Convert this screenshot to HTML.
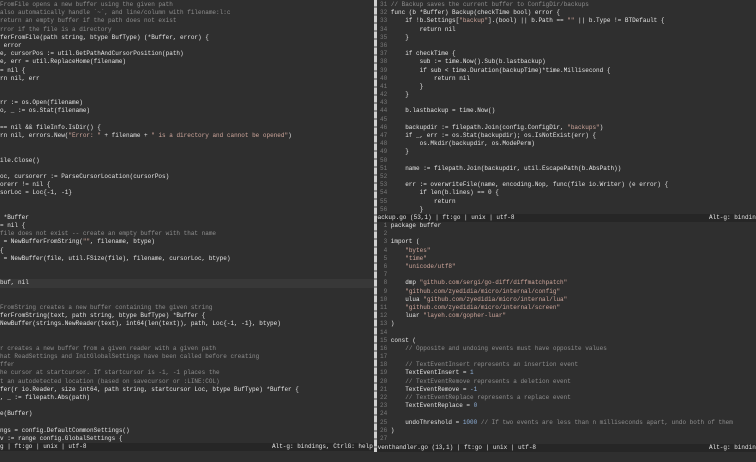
<!DOCTYPE html>
<html><head><meta charset="utf-8"><style>
html,body{margin:0;padding:0;background:#2f2f2f;width:756px;height:462px;overflow:hidden}
.p{position:absolute;top:1px;margin:0;font-family:"Liberation Mono",monospace;font-size:6px;line-height:8.18px;color:#e6e6e6;white-space:pre}
.c{color:#8e8e8e}
.s{color:#cfa79c}
.n{color:#7a7a7a}
.b{color:#8fb0d8}
.hl{background:#383838;display:inline-block;width:374px}
#L{left:0;width:374px;overflow:hidden}
#R{left:380px;width:376px;overflow:hidden}
.sb{position:absolute;height:8.18px;background:#262626;font-family:"Liberation Mono",monospace;font-size:6px;line-height:8.18px;color:#e6e6e6;white-space:pre;overflow:hidden}
.sb i{font-style:normal;position:absolute;top:0}
#div{position:absolute;left:374px;top:0;width:3px;height:452px;background:repeating-linear-gradient(#cfcfcf 0 6px,#8a8a8a 6px 8px)}
</style></head><body>
<pre class="p" id="L"><span class="c">FromFile opens a new buffer using the given path</span>
<span class="c">also automatically handle `~`, and line/column with filename:l:c</span>
<span class="c">return an empty buffer if the path does not exist</span>
<span class="c">rror if the file is a directory</span>
ferFromFile(path string, btype BufType) (*Buffer, error) {
 error
e, cursorPos := util.GetPathAndCursorPosition(path)
e, err = util.ReplaceHome(filename)
= nil {
rn nil, err


rr := os.Open(filename)
o, _ := os.Stat(filename)

== nil &amp;&amp; fileInfo.IsDir() {
rn nil, errors.New(<span class="s">"Error: "</span> + filename + <span class="s">" is a directory and cannot be opened"</span>)


ile.Close()

oc, cursorerr := ParseCursorLocation(cursorPos)
orerr != nil {
sorLoc = Loc{-1, -1}


 *Buffer
= nil {
<span class="c">file does not exist -- create an empty buffer with that name</span>
 = NewBufferFromString(<span class="s">""</span>, filename, btype)
{
 = NewBuffer(file, util.FSize(file), filename, cursorLoc, btype)


<span class="hl">buf, nil</span>


<span class="c">FromString creates a new buffer containing the given string</span>
ferFromString(text, path string, btype BufType) *Buffer {
NewBuffer(strings.NewReader(text), int64(len(text)), path, Loc{-1, -1}, btype)


<span class="c">r creates a new buffer from a given reader with a given path</span>
<span class="c">hat ReadSettings and InitGlobalSettings have been called before creating</span>
<span class="c">ffer</span>
<span class="c">he cursor at startcursor. If startcursor is -1, -1 places the</span>
<span class="c">t an autodetected location (based on savecursor or :LINE:COL)</span>
fer(r io.Reader, size int64, path string, startcursor Loc, btype BufType) *Buffer {
, _ := filepath.Abs(path)

e(Buffer)

ngs = config.DefaultCommonSettings()
v := range config.GlobalSettings {</pre>
<pre class="p" id="R"><span class="n">31</span> <span class="c">// Backup saves the current buffer to ConfigDir/backups</span>
<span class="n">32</span> func (b *Buffer) Backup(checkTime bool) error {
<span class="n">33</span>     if !b.Settings[<span class="s">"backup"</span>].(bool) || b.Path == <span class="s">""</span> || b.Type != BTDefault {
<span class="n">34</span>         return nil
<span class="n">35</span>     }
<span class="n">36</span>
<span class="n">37</span>     if checkTime {
<span class="n">38</span>         sub := time.Now().Sub(b.lastbackup)
<span class="n">39</span>         if sub &lt; time.Duration(backupTime)*time.Millisecond {
<span class="n">40</span>             return nil
<span class="n">41</span>         }
<span class="n">42</span>     }
<span class="n">43</span>
<span class="n">44</span>     b.lastbackup = time.Now()
<span class="n">45</span>
<span class="n">46</span>     backupdir := filepath.Join(config.ConfigDir, <span class="s">"backups"</span>)
<span class="n">47</span>     if _, err := os.Stat(backupdir); os.IsNotExist(err) {
<span class="n">48</span>         os.Mkdir(backupdir, os.ModePerm)
<span class="n">49</span>     }
<span class="n">50</span>
<span class="n">51</span>     name := filepath.Join(backupdir, util.EscapePath(b.AbsPath))
<span class="n">52</span>
<span class="n">53</span>     err := overwriteFile(name, encoding.Nop, func(file io.Writer) (e error) {
<span class="n">54</span>         if len(b.lines) == 0 {
<span class="n">55</span>             return
<span class="n">56</span>         }

<span class="n"> 1</span> package buffer
<span class="n"> 2</span>
<span class="n"> 3</span> import (
<span class="n"> 4</span>     <span class="s">"bytes"</span>
<span class="n"> 5</span>     <span class="s">"time"</span>
<span class="n"> 6</span>     <span class="s">"unicode/utf8"</span>
<span class="n"> 7</span>
<span class="n"> 8</span>     dmp <span class="s">"github.com/sergi/go-diff/diffmatchpatch"</span>
<span class="n"> 9</span>     <span class="s">"github.com/zyedidia/micro/internal/config"</span>
<span class="n">10</span>     ulua <span class="s">"github.com/zyedidia/micro/internal/lua"</span>
<span class="n">11</span>     <span class="s">"github.com/zyedidia/micro/internal/screen"</span>
<span class="n">12</span>     luar <span class="s">"layeh.com/gopher-luar"</span>
<span class="n">13</span> )
<span class="n">14</span>
<span class="n">15</span> const (
<span class="n">16</span>     <span class="c">// Opposite and undoing events must have opposite values</span>
<span class="n">17</span>
<span class="n">18</span>     <span class="c">// TextEventInsert represents an insertion event</span>
<span class="n">19</span>     TextEventInsert = <span class="b">1</span>
<span class="n">20</span>     <span class="c">// TextEventRemove represents a deletion event</span>
<span class="n">21</span>     TextEventRemove = <span class="b">-1</span>
<span class="n">22</span>     <span class="c">// TextEventReplace represents a replace event</span>
<span class="n">23</span>     TextEventReplace = <span class="b">0</span>
<span class="n">24</span>
<span class="n">25</span>     undoThreshold = <span class="b">1000</span> <span class="c">// If two events are less than n milliseconds apart, undo both of them</span>
<span class="n">26</span> )
<span class="n">27</span>
</pre>
<div class="sb" style="left:0;width:374px;top:442.7px">g | ft:go | unix | utf-8<i style="left:272px">Alt-g: bindings, CtrlG: help</i></div>
<div class="sb" style="left:374px;width:382px;top:213.7px">backup.go (53,1) | ft:go | unix | utf-8<i style="left:335px">Alt-g: bindings</i></div>
<div class="sb" style="left:374px;width:382px;top:443.8px">eventhandler.go (13,1) | ft:go | unix | utf-8<i style="left:335px">Alt-g: bindings</i></div>
<div id="div"></div>
</body></html>
